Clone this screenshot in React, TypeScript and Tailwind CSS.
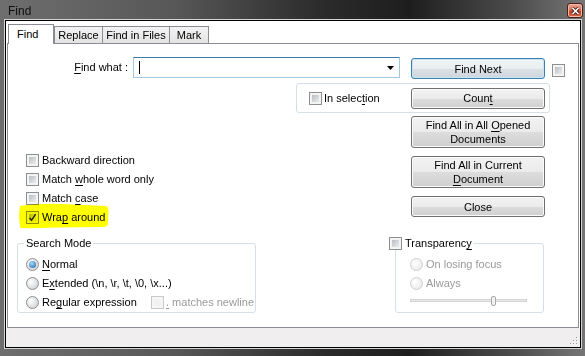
import React from "react";

const U = ({ children }: { children: React.ReactNode }) => <span className="underline underline-offset-[2px]">{children}</span>;

const CheckBox = ({ checked = false, disabled = false }: { checked?: boolean; disabled?: boolean }) => (
  <span
    className={`relative inline-flex h-[13px] w-[13px] shrink-0 border p-[2px] ${
      disabled ? "border-[#c9c9c9] bg-[#f6f6f6]" : "border-[#8e8f8f] bg-[#f4f4f4]"
    }`}
  >
    <span
      className={`block h-full w-full ${
        disabled ? "bg-[#f2f2f2]" : "bg-[linear-gradient(135deg,#b9bdc3,#ededed)]"
      }`}
    />
    {checked && (
      <svg className="absolute left-0 top-0" width="11" height="11" viewBox="0 0 11 11">
        <path d="M2.5 5.8 L4.5 8.3 L8.6 2.2" fill="none" stroke="#1f2b20" strokeWidth="1.4" />
      </svg>
    )}
  </span>
);

const Radio = ({ checked = false, disabled = false }: { checked?: boolean; disabled?: boolean }) => (
  <span
    className={`inline-flex h-[13px] w-[13px] shrink-0 items-center justify-center rounded-full border ${
      disabled
        ? "border-[#cfcfcf] bg-[radial-gradient(circle_at_35%_35%,#ffffff,#e6e6e6)]"
        : "border-[#8e8f8f] bg-[radial-gradient(circle_at_35%_35%,#ffffff,#c6c9cd)]"
    }`}
  >
    {checked && (
      <span className="h-[7px] w-[7px] rounded-full bg-[radial-gradient(circle_at_40%_35%,#a6dcfa,#1d5f9c)]" />
    )}
  </span>
);

const WinButton = ({
  children,
  className = "",
  isDefault = false,
}: {
  children: React.ReactNode;
  className?: string;
  isDefault?: boolean;
}) => (
  <div
    className={`flex w-[134px] flex-col items-center justify-center rounded-[3px] border text-center leading-[14px] ${
      isDefault
        ? "border-[#3c7fb1] shadow-[inset_0_0_0_1px_#c6e6f7] bg-[linear-gradient(to_bottom,#f1f4f6_0%,#e9eef1_50%,#dbe1e5_50%,#cfd6db_100%)]"
        : "border-[#707070] shadow-[inset_0_0_0_1px_#fbfbfb] bg-[linear-gradient(to_bottom,#f2f2f2_0%,#ebebeb_50%,#dddddd_50%,#cfcfcf_100%)]"
    } ${className}`}
  >
    {children}
  </div>
);

const Row = ({ children }: { children: React.ReactNode }) => (
  <div className="flex h-[19px] items-center gap-[3px] leading-[13px]">{children}</div>
);

export default function App() {
  return (
    <div className="flex h-[356px] w-[585px] flex-col bg-[linear-gradient(to_right,#6e6e6e_0%,#575757_30%,#2b2b2b_55%,#1e1e1e_70%,#4d4d4d_88%,#767676_100%)] font-['Liberation_Sans',Arial,sans-serif] text-[11px] text-black">
      {/* title bar */}
      <div className="flex h-[19px] shrink-0 items-start justify-between pl-[8px] pr-[2px]">
        <span className="pt-[4px] text-[12px] leading-[14px] text-[#111]">Find</span>
        <div className="mt-[3px] flex h-[15px] w-[16px] items-center justify-center rounded-[3px] border border-[#4a2118] bg-[linear-gradient(to_bottom,#eaa897_0%,#d8735c_45%,#c6452a_55%,#d2664a_100%)] shadow-[inset_0_0_0_1px_#f2b9aa]">
          <svg width="9" height="8" viewBox="0 0 9 8">
            <path d="M1.5 1 L7.5 7 M7.5 1 L1.5 7" stroke="#3b1a14" strokeWidth="3.2" />
            <path d="M1.5 1 L7.5 7 M7.5 1 L1.5 7" stroke="#ffffff" strokeWidth="1.6" />
          </svg>
        </div>
      </div>

      {/* client */}
      <div className="mb-[7px] ml-[4px] mr-[3px] flex flex-1 flex-col border border-[#d4d4d4]">
        <div className="flex flex-1 flex-col border border-black bg-[#f0eeee]">
          <div className="flex flex-col bg-white px-[1px] pt-[3px]">
            {/* tabs */}
            <div className="flex h-[20px] items-end pl-[1px]">
              <div className="relative z-10 flex h-[20px] w-[46px] items-center border border-b-0 border-[#898c95] bg-white pl-[8px] leading-[13px]">
                Find
              </div>
              <div className="flex h-[18px] w-[49px] items-center justify-center border border-[#898c95] bg-[linear-gradient(to_bottom,#f3f3f3,#e3e3e3)] leading-[13px]">
                Replace
              </div>
              <div className="-ml-px flex h-[18px] w-[68px] items-center justify-center border border-[#898c95] bg-[linear-gradient(to_bottom,#f3f3f3,#e3e3e3)] leading-[13px]">
                Find in Files
              </div>
              <div className="-ml-px flex h-[18px] w-[40px] items-center justify-center border border-[#898c95] bg-[linear-gradient(to_bottom,#f3f3f3,#e3e3e3)] leading-[13px]">
                Mark
              </div>
            </div>

            {/* tab panel */}
            <div className="-mt-px h-[285px] border border-[#898c95] bg-white">
              {/* find what row */}
              <div className="mt-[13px] flex items-start">
                <div className="w-[120px] pt-[4px] text-right leading-[13px]">
                  <U>F</U>ind what :
                </div>
                <div className="ml-[5px] flex h-[21px] w-[267px] items-center justify-between border border-[#a4c9e3] border-t-[#3d7bad] pl-[5px] pr-[5px]">
                  <span className="h-[13px] w-px bg-black" />
                  <svg width="7" height="4" viewBox="0 0 7 4">
                    <path d="M0 0 H7 L3.5 4 Z" fill="#000" />
                  </svg>
                </div>
                <WinButton isDefault className="ml-[11px] mt-px h-[21px]">
                  Find Next
                </WinButton>
                <div className="ml-[7px] mt-[5px]">
                  <CheckBox />
                </div>
              </div>

              {/* in selection group */}
              <div className="ml-[288px] mt-[4px] flex h-[30px] w-[254px] items-center justify-between rounded-[3px] border border-[#d5dfe5] pl-[12px] pr-[4px]">
                <div className="flex items-center gap-[2px] leading-[13px]">
                  <CheckBox />
                  <span>
                    In selec<U>t</U>ion
                  </span>
                </div>
                <WinButton className="h-[21px]">
                  <span>
                    Coun<U>t</U>
                  </span>
                </WinButton>
              </div>

              {/* options + buttons */}
              <div className="mt-[3px] flex">
                <div className="w-[403px] pl-[18px] pt-[35px]">
                  <Row>
                    <CheckBox />
                    <span>Backward direction</span>
                  </Row>
                  <Row>
                    <CheckBox />
                    <span>
                      Match <U>w</U>hole word only
                    </span>
                  </Row>
                  <Row>
                    <CheckBox />
                    <span>
                      Match <U>c</U>ase
                    </span>
                  </Row>
                  <div className="relative">
                    <Row>
                      <CheckBox checked />
                      <span>
                        Wra<U>p</U> around
                      </span>
                    </Row>
                    <svg
                      className="pointer-events-none absolute left-[-8px] top-[-6px] mix-blend-multiply"
                      width="92"
                      height="27"
                      viewBox="0 0 92 27"
                    >
                      <path
                        d="M2 4 Q20 1 45 2 L88 4 Q91 5 90.5 9 L90 21 Q90 25 85 25 L40 25.5 Q12 26.5 2.5 26 Q0 15 2 4 Z"
                        fill="#ffff00"
                      />
                    </svg>
                  </div>
                </div>
                <div className="flex w-[134px] flex-col gap-[8px]">
                  <WinButton className="h-[32px]">
                    <span>Find All in All <U>O</U>pened</span>
                    <span>Documents</span>
                  </WinButton>
                  <WinButton className="h-[32px]">
                    <span>Find All in Current</span>
                    <span>
                      <U>D</U>ocument
                    </span>
                  </WinButton>
                  <WinButton className="h-[21px]">Close</WinButton>
                </div>
              </div>

              {/* bottom groups */}
              <div className="mt-[10px] flex items-start">
                <fieldset className="ml-[9px] h-[76px] w-[239px] rounded-[3px] border border-[#d5dfe5]">
                  <legend className="ml-[6px] px-[2px] leading-[13px]">Search Mode</legend>
                  <div className="mt-[5px] pl-[8px]">
                    <Row>
                      <Radio checked />
                      <span>
                        <U>N</U>ormal
                      </span>
                    </Row>
                    <Row>
                      <Radio />
                      <span>
                        E<U>x</U>tended (\n, \r, \t, \0, \x...)
                      </span>
                    </Row>
                    <Row>
                      <Radio />
                      <span className="w-[106px]">
                        Re<U>g</U>ular expression
                      </span>
                      <CheckBox disabled />
                      <span className="ml-[-1px] text-[#9a9a9a]">
                        <U>.</U> matches newline
                      </span>
                    </Row>
                  </div>
                </fieldset>

                <fieldset className="ml-[139px] h-[76px] w-[149px] rounded-[3px] border border-[#d5dfe5]">
                  <legend className="ml-[-7px] flex items-center gap-[3px] pr-[2px] leading-[13px]">
                    <CheckBox />
                    <span>
                      Transparenc<U>y</U>
                    </span>
                  </legend>
                  <div className="mt-[5px] pl-[14px] text-[#9a9a9a]">
                    <Row>
                      <Radio disabled />
                      <span>On losing focus</span>
                    </Row>
                    <Row>
                      <Radio disabled />
                      <span>Always</span>
                    </Row>
                    <div className="relative mt-[3px] h-[10px] w-[117px]">
                      <div className="absolute left-0 right-0 top-[3px] h-[3px] border border-[#d3d3d3] bg-[#e9ebeb]" />
                      <div className="absolute left-[81px] top-0 h-[10px] w-[5px] rounded-[2px] border border-[#a8a8a8] bg-[#f2f2f2]" />
                    </div>
                  </div>
                </fieldset>
              </div>
            </div>
          </div>

          {/* status bar */}
          <div className="flex flex-1 items-end justify-end pb-[1px] pr-[1px]">
            <svg width="9" height="9" viewBox="0 0 9 9">
              {[
                [7, 1],
                [4, 4],
                [7, 4],
                [1, 7],
                [4, 7],
                [7, 7],
              ].map(([x, y]) => (
                <g key={`${x}-${y}`}>
                  <rect x={x} y={y} width="1" height="1" fill="#ffffff" />
                  <rect x={x - 1} y={y - 1} width="1" height="1" fill="#9c9c9c" />
                </g>
              ))}
            </svg>
          </div>
        </div>
      </div>
    </div>
  );
}
